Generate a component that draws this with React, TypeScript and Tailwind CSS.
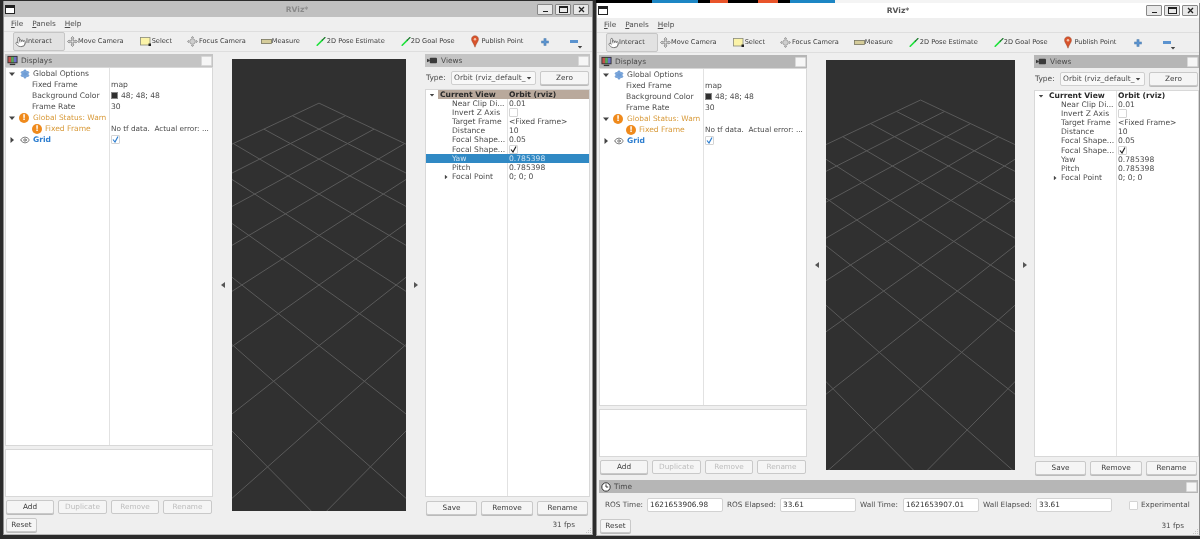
import { Eye, Pointer, Settings } from "lucide-react";

// orbit view of the 10x10 grid, yaw/pitch 45deg, distance 10
function GridView({ width, height }: { width: number; height: number }) {
  const f = height / 2 / Math.tan(Math.PI / 8);
  const project = (a: number, b: number) => {
    const depth = 10 - 0.5 * (a + b);
    return [
      width / 2 + (f * 0.7071 * (a - b)) / depth,
      height / 2 + (f * 0.5 * (a + b)) / depth,
    ];
  };
  const lines = [];
  for (let i = -5; i <= 5; i++) {
    const [x1, y1] = project(i, -5);
    const [x2, y2] = project(i, 5);
    const [x3, y3] = project(-5, i);
    const [x4, y4] = project(5, i);
    lines.push(<line key={`a${i}`} x1={x1} y1={y1} x2={x2} y2={y2} />);
    lines.push(<line key={`b${i}`} x1={x3} y1={y3} x2={x4} y2={y4} />);
  }
  return (
    <svg width={width} height={height} className="block" stroke="#5a5a5a" strokeWidth="1">
      {lines}
    </svg>
  );
}

function Warn({ className }: { className?: string }) {
  return (
    <span className={`flex h-[10px] w-[10px] shrink-0 items-center justify-center rounded-full bg-[#ef8a1c] text-[8px] font-bold leading-none text-white ${className ?? ""}`}>
      !
    </span>
  );
}

function Arrow({ open, className }: { open?: boolean; className?: string }) {
  return (
    <svg width="6" height="6" viewBox="0 0 6 6" className={`shrink-0 ${className ?? ""}`} fill="#444">
      {open ? <path d="M0 1.5h6L3 5z" /> : <path d="M1.5 0v6L5 3z" />}
    </svg>
  );
}

function Check({ checked, dark }: { checked?: boolean; dark?: boolean }) {
  return (
    <span className="flex h-[9px] w-[9px] shrink-0 items-center justify-center rounded-[1px] border border-[#d4d4d4] bg-white">
      {checked && (
        <svg width="7" height="7" viewBox="0 0 7 7" fill="none" stroke={dark ? "#222" : "#2f7fd0"} strokeWidth="1.2">
          <path d="M1 3.5 3 6 6 0.5" />
        </svg>
      )}
    </span>
  );
}

function Btn({ label, disabled, className }: { label: string; disabled?: boolean; className?: string }) {
  return (
    <div className={`flex h-[14px] items-center justify-center rounded-[2px] border border-[#c9c9c9] bg-[#f5f5f5] text-[7.3px] ${disabled ? "text-[#bdbdbd]" : "text-[#3c3c3c] shadow-[0_1px_0_#bbb]"} ${className ?? ""}`}>
      {label}
    </div>
  );
}

function PaneHeader({ icon, title, active }: { icon?: React.ReactNode; title: string; active?: boolean }) {
  return (
    <div className={`flex h-[13px] shrink-0 items-center pl-[2px] pr-[1px] text-[#4a4a4a] ${active ? "bg-[#b6b6b6]" : "bg-[#c4c4c4]"}`}>
      <span className="flex w-[14px] shrink-0 items-center">{icon}</span>
      <span className="flex-1 text-[7.4px]">{title}</span>
      <span className="h-[10px] w-[11px] rounded-[1px] border border-[#d8d8d8] bg-[#f6f6f6]" />
    </div>
  );
}

function MonitorIcon() {
  return (
    <svg width="11" height="11" viewBox="0 0 12 11">
      <rect x="0.5" y="0.5" width="11" height="8" fill="#333" />
      <rect x="1.5" y="1.5" width="3" height="6" fill="#c0504d" />
      <rect x="4.5" y="1.5" width="3" height="6" fill="#5aa85a" />
      <rect x="7.5" y="1.5" width="3" height="6" fill="#6f6fc8" />
      <rect x="3" y="9" width="6" height="1.5" fill="#333" />
    </svg>
  );
}

function CameraIcon() {
  return (
    <svg width="10" height="7" viewBox="0 0 11 7" fill="#3a3a3a">
      <path d="M0 1.5 3 3v1L0 5.5z" />
      <rect x="3" y="0.5" width="8" height="6" rx="1" />
    </svg>
  );
}

function ClockIcon() {
  return (
    <svg width="10" height="10" viewBox="0 0 10 10" fill="#fff" stroke="#333" strokeWidth="1">
      <circle cx="5" cy="5" r="4.2" />
      <path d="M5 2.4V5h2.2" fill="none" />
    </svg>
  );
}

function MoveIcon() {
  return (
    <svg width="11" height="11" viewBox="0 0 12 12" fill="#e4e4e4" stroke="#777" strokeWidth="0.8">
      <path d="M6 .5 7.6 2.4H6.8V5.2H9.6V4.4L11.5 6 9.6 7.6V6.8H6.8V9.6H7.6L6 11.5 4.4 9.6H5.2V6.8H2.4V7.6L.5 6 2.4 4.4V5.2H5.2V2.4H4.4z" />
    </svg>
  );
}

function FocusIcon() {
  return (
    <svg width="11" height="11" viewBox="0 0 12 12" fill="#cfcfcf" stroke="#8a8a8a" strokeWidth="0.7">
      <path d="M6 .4 7.4 2H4.6zM6 11.6 4.6 10h2.8zM.4 6 2 4.6v2.8zM11.6 6 10 7.4V4.6z" />
      <circle cx="6" cy="6" r="3" />
    </svg>
  );
}

function SelectIcon() {
  return (
    <svg width="11" height="9" viewBox="0 0 11 9">
      <rect x="0.5" y="0.5" width="9.5" height="7.5" fill="#fbf3a8" stroke="#8b8b78" strokeWidth="0.8" />
      <rect x="8.5" y="6.5" width="2.5" height="2.5" fill="#222" />
    </svg>
  );
}

function MeasureIcon() {
  return (
    <svg width="11" height="5" viewBox="0 0 11 5">
      <rect x="0.5" y="0.5" width="10" height="4" fill="#d5cc9a" stroke="#77745e" strokeWidth="0.8" />
    </svg>
  );
}

function PoseIcon() {
  return (
    <svg width="10" height="9" viewBox="0 0 10 10" fill="none" strokeLinecap="round">
      <path d="M.8 9.2 6.5 3.5" stroke="#1fe23c" strokeWidth="1.8" />
      <path d="M6.5 3.5 9.4.6" stroke="#1c7a2c" strokeWidth="1.4" />
    </svg>
  );
}

function PinIcon() {
  return (
    <svg width="8" height="13" viewBox="0 0 9 14">
      <path d="M4.5.5C2.2.5.6 2.2.6 4.4c0 2.7 2.6 4.6 3.9 9 1.3-4.4 3.9-6.3 3.9-9C8.4 2.2 6.8.5 4.5.5z" fill="#d9532c" stroke="#94462a" strokeWidth="0.5" />
      <circle cx="4.5" cy="4.4" r="1.4" fill="#f3c3a8" />
    </svg>
  );
}

function ToolItem({ icon, label, className, slot }: { icon: React.ReactNode; label: string; className?: string; slot: string }) {
  return (
    <div className={`flex shrink-0 items-center ${className ?? ""}`}>
      <span className={`flex shrink-0 items-center ${slot}`}>{icon}</span>
      <span>{label}</span>
    </div>
  );
}

function Toolbar() {
  return (
    <div className="flex h-[21px] shrink-0 items-center border-y border-[#dedede] bg-[#efefef] pl-[9px] text-[6.6px] text-[#3c3c3c]">
      <div className="flex h-[19px] w-[52px] shrink-0 items-center rounded-[2px] border border-[#c6c6c6] bg-[#e2e2e2] pl-px">
        <Pointer size={14} strokeWidth={1.3} className="w-[11px] shrink-0 fill-white text-[#333]" />
        <span>Interact</span>
      </div>
      <ToolItem icon={<MoveIcon />} label="Move Camera" slot="w-[11px]" className="ml-[2px]" />
      <ToolItem icon={<SelectIcon />} label="Select" slot="w-[12px]" className="ml-[16px]" />
      <ToolItem icon={<FocusIcon />} label="Focus Camera" slot="w-[12px]" className="ml-[15px]" />
      <ToolItem icon={<MeasureIcon />} label="Measure" slot="w-[11px]" className="ml-[15px]" />
      <ToolItem icon={<PoseIcon />} label="2D Pose Estimate" slot="w-[11px]" className="ml-[16px]" />
      <ToolItem icon={<PoseIcon />} label="2D Goal Pose" slot="w-[10px]" className="ml-[16px]" />
      <ToolItem icon={<PinIcon />} label="Publish Point" slot="w-[10px]" className="ml-[17px]" />
      <svg width="8" height="8" viewBox="0 0 10 10" className="ml-[18px]" fill="#5b93cf" stroke="#3f6f9f" strokeWidth="0.5">
        <path d="M3.6.6h2.8v3h3v2.8h-3v3H3.6v-3h-3V3.6h3z" />
      </svg>
      <div className="relative ml-[21px] h-[10px] w-[12px]">
        <span className="absolute left-0 top-[3px] h-[3px] w-[8px] bg-[#5b93cf]" />
        <Arrow open className="absolute right-[-1px] bottom-[-3px] scale-75" />
      </div>
    </div>
  );
}

function PropRow({ name, value }: { name: string; value: React.ReactNode }) {
  return (
    <div className="flex h-[11px] items-center">
      <span className="ml-[26px] w-[79px] shrink-0 whitespace-nowrap">{name}</span>
      <span className="whitespace-nowrap">{value}</span>
    </div>
  );
}

function DisplayTree() {
  const nameRow = "flex h-[11px] items-center";
  return (
    <div className="relative min-h-0 flex-1 border border-[#d8d8d8] bg-white text-[7.6px] text-[#4c4c4c]">
      <div className="absolute bottom-0 left-[103px] top-0 w-px bg-[#e2e2e2]" />
      <div className={nameRow}>
        <Arrow open className="ml-[3px]" />
        <Settings size={10} strokeWidth={2.4} className="ml-[5px] shrink-0 fill-[#7ba7dc] text-[#6b9ad4]" />
        <span className="ml-[3px]">Global Options</span>
      </div>
      <PropRow name="Fixed Frame" value="map" />
      <PropRow name="Background Color" value={<span className="flex items-center gap-[3px]"><span className="h-[7px] w-[7px] border border-[#888] bg-[#303030]" />48; 48; 48</span>} />
      <PropRow name="Frame Rate" value="30" />
      <div className={nameRow}>
        <Arrow open className="ml-[3px]" />
        <Warn className="ml-[4px]" />
        <span className="ml-[4px] whitespace-nowrap text-[7.4px] text-[#d89a3a]">Global Status: Warn</span>
      </div>
      <div className={nameRow}>
        <Warn className="ml-[26px]" />
        <span className="ml-[3px] w-[66px] shrink-0 whitespace-nowrap text-[#d89a3a]">Fixed Frame</span>
        <span className="whitespace-nowrap text-[7.3px]">No tf data.&nbsp; Actual error: ...</span>
      </div>
      <div className={nameRow}>
        <Arrow className="ml-[3px]" />
        <Eye size={10} strokeWidth={1.8} className="ml-[5px] shrink-0 text-[#555]" />
        <span className="ml-[3px] w-[78px] shrink-0 font-bold text-[#2f7fd0]">Grid</span>
        <Check checked />
      </div>
    </div>
  );
}

function ViewRow({ name, value, selected, arrow }: { name: string; value: React.ReactNode; selected?: boolean; arrow?: boolean }) {
  return (
    <div className={`flex h-[9.15px] items-center ${selected ? "bg-[#3089c4] text-[#cfe3f2]" : ""}`}>
      <span className="flex w-[83px] shrink-0 items-center whitespace-nowrap pl-[26px]">
        {arrow && <Arrow className="-ml-[9px] mr-[3px] scale-75" />}
        {name}
      </span>
      <span className="whitespace-nowrap">{value}</span>
    </div>
  );
}

function ViewsPanel({ active, highlight }: { active?: boolean; highlight?: boolean }) {
  return (
    <div className="flex w-[165px] shrink-0 flex-col">
      <PaneHeader icon={<CameraIcon />} title="Views" active={active} />
      <div className="flex h-[22px] shrink-0 items-center text-[7.5px] text-[#4c4c4c]">
        <span className="ml-[1px] w-[25px]">Type:</span>
        <div className="flex h-[14px] w-[85px] items-center justify-between rounded-[2px] border border-[#cfcfcf] bg-[#f8f8f8] pl-[2px] pr-[3px]">
          <span className="whitespace-nowrap">Orbit (rviz_default_</span>
          <Arrow open className="scale-75" />
        </div>
        <Btn label="Zero" className="ml-[4px] w-[49px]" />
      </div>
      <div className="relative min-h-0 flex-1 border border-[#d8d8d8] bg-white text-[7.6px] text-[#4c4c4c]">
        <div className="absolute bottom-0 left-[81px] top-0 w-px bg-[#e2e2e2]" />
        <div className="relative flex h-[9.15px] items-center font-bold text-[#2a2a2a]">
          <span className="flex w-[12px] shrink-0 items-center">
            <Arrow open className="ml-[3px] scale-75" />
          </span>
          <div className={`flex h-full flex-1 items-center pl-[2px] ${highlight ? "bg-[#b9a99c]" : ""}`}>
            <span className="w-[69px] shrink-0 whitespace-nowrap">Current View</span>
            <span className="whitespace-nowrap">Orbit (rviz)</span>
          </div>
        </div>
        <div className="relative">
          <ViewRow name="Near Clip Di..." value="0.01" />
          <ViewRow name="Invert Z Axis" value={<Check />} />
          <ViewRow name="Target Frame" value="<Fixed Frame>" />
          <ViewRow name="Distance" value="10" />
          <ViewRow name="Focal Shape..." value="0.05" />
          <ViewRow name="Focal Shape..." value={<Check checked dark />} />
          <ViewRow name="Yaw" value="0.785398" selected={highlight} />
          <ViewRow name="Pitch" value="0.785398" />
          <ViewRow name="Focal Point" value="0; 0; 0" arrow />
        </div>
      </div>
      <div className="flex h-[18px] shrink-0 items-end gap-[4px] px-[1px]">
        <Btn label="Save" className="w-[51px]" />
        <Btn label="Remove" className="w-[52px]" />
        <Btn label="Rename" className="w-[51px]" />
      </div>
    </div>
  );
}

function DisplaysPanel({ active }: { active?: boolean }) {
  return (
    <div className="flex w-[208px] shrink-0 flex-col">
      <PaneHeader icon={<MonitorIcon />} title="Displays" active={active} />
      <DisplayTree />
      <div className="mt-[3px] h-[48px] shrink-0 border border-[#d8d8d8] bg-white" />
      <div className="flex h-[18px] shrink-0 items-end gap-[4px] px-[1px] pb-px">
        <Btn label="Add" className="w-[48px]" />
        <Btn label="Duplicate" disabled className="w-[49px]" />
        <Btn label="Remove" disabled className="w-[48px]" />
        <Btn label="Rename" disabled className="w-[49px]" />
      </div>
    </div>
  );
}

function Gutter({ dir }: { dir: "left" | "right" }) {
  return (
    <div className="flex w-[19px] shrink-0 items-center justify-center">
      <svg width="4" height="6" viewBox="0 0 4 6" fill="#555">
        {dir === "left" ? <path d="M4 0v6L0 3z" /> : <path d="M0 0v6l4-3z" />}
      </svg>
    </div>
  );
}

function TimeField({ label, value, labelW }: { label: string; value: string; labelW: string }) {
  return (
    <>
      <span className={`shrink-0 whitespace-nowrap ${labelW}`}>{label}</span>
      <div className="flex h-[14px] w-[76px] shrink-0 items-center rounded-[2px] border border-[#d2d2d2] bg-white pl-[2px] text-[#333]">{value}</div>
    </>
  );
}

function TimePanel() {
  return (
    <div className="mt-[5px] shrink-0">
      <div className="flex h-[13px] items-center bg-[#b6b6b6] pl-[2px] pr-[1px] text-[#4a4a4a]">
        <span className="flex w-[13px] items-center"><ClockIcon /></span>
        <span className="flex-1 text-[7.4px]">Time</span>
        <span className="h-[10px] w-[11px] rounded-[1px] border border-[#d8d8d8] bg-[#f6f6f6]" />
      </div>
      <div className="flex h-[24px] items-center pl-[6px] text-[7.3px] text-[#4c4c4c]">
        <TimeField label="ROS Time:" value="1621653906.98" labelW="w-[42px]" />
        <span className="w-[4px] shrink-0" />
        <TimeField label="ROS Elapsed:" value="33.61" labelW="w-[53px]" />
        <span className="w-[4px] shrink-0" />
        <TimeField label="Wall Time:" value="1621653907.01" labelW="w-[43px]" />
        <span className="w-[4px] shrink-0" />
        <TimeField label="Wall Elapsed:" value="33.61" labelW="w-[53px]" />
        <span className="ml-[17px]"><Check /></span>
        <span className="ml-[3px]">Experimental</span>
      </div>
    </div>
  );
}

function RVizWindow({ active, width, renderW, renderH, time, pad }: { active?: boolean; width: string; renderW: number; renderH: number; time?: boolean; pad: string }) {
  return (
    <div className={`flex h-full shrink-0 flex-col border-x border-b border-x-[#8f8f8f] border-b-[#b5b5b5] bg-[#efefef] ${width}`}>
      <div className={`flex shrink-0 items-center ${active ? "h-[15px] bg-white pl-px pr-px" : "h-[16px] bg-[#c0c0c0] pl-px pr-[3px] pt-px"}`}>
        <span className="w-[52px] shrink-0">
          <span className="block h-[9px] w-[10px] border border-[#222] border-t-[3px] bg-white" />
        </span>
        <span className={`flex-1 text-center text-[7.6px] font-bold ${active ? "text-[#555]" : "text-[#8a8a8a]"}`}>RViz*</span>
        <div className="flex gap-[2px]">
          {["min", "max", "close"].map((k) => (
            <span key={k} className="flex h-[11px] w-[16px] items-center justify-center rounded-[1px] border border-[#888] bg-[#e8e8e8]">
              {k === "min" && <span className="mt-[4px] h-px w-[5px] bg-[#222]" />}
              {k === "max" && <span className="h-[7px] w-[9px] border border-[#222] border-t-2" />}
              {k === "close" && (
                <svg width="7" height="7" viewBox="0 0 7 7" stroke="#222" strokeWidth="1.3"><path d="M1 1l5 5M6 1 1 6" /></svg>
              )}
            </span>
          ))}
        </div>
      </div>
      <div className="flex h-[14px] shrink-0 items-center gap-[9px] bg-[#efefef] pl-[7px] text-[7.3px] text-[#4c4c4c]">
        <span><span className="underline">F</span>ile</span>
        <span><span className="underline">P</span>anels</span>
        <span><span className="underline">H</span>elp</span>
      </div>
      <Toolbar />
      <div className={`mt-[2px] flex min-h-0 flex-1 ${pad}`}>
        <DisplaysPanel active={active} />
        <Gutter dir="left" />
        <div className="mt-[5px] shrink-0 self-start overflow-hidden bg-[#303030]">
          <GridView width={renderW} height={renderH} />
        </div>
        <Gutter dir="right" />
        <ViewsPanel active={active} highlight={!active} />
      </div>
      {time && <div className={pad}><TimePanel /></div>}
      <div className={`relative flex shrink-0 items-center justify-between text-[7.3px] text-[#4c4c4c] ${active ? "h-[18px]" : "h-[19px]"} ${pad}`}>
        <Btn label="Reset" className="ml-[1px] w-[31px]" />
        <span className="mr-[14px]">31 fps</span>
        <svg width="8" height="8" viewBox="0 0 8 8" fill="#c4c4c4" className="absolute bottom-0 right-0">
          <rect x="6" y="6" width="1" height="1" />
          <rect x="4" y="6" width="1" height="1" />
          <rect x="6" y="4" width="1" height="1" />
          <rect x="2" y="6" width="1" height="1" />
          <rect x="4" y="4" width="1" height="1" />
          <rect x="6" y="2" width="1" height="1" />
        </svg>
      </div>
    </div>
  );
}

export default function App() {
  return (
    <div className="flex h-[539px] w-[1200px] overflow-hidden bg-[#2b2b2b] font-['DejaVu_Sans',sans-serif] text-[7.5px] leading-none blur-[0.4px] [text-rendering:geometricPrecision]">
      <div className="ml-[3px] mt-px h-[534px]">
        <RVizWindow width="w-[590px]" renderW={174} renderH={452} pad="pl-px pr-[3px]" />
      </div>
      <div className="ml-[3px] flex h-full flex-col">
        <div className="flex h-[3px] shrink-0">
          <span className="w-[56px] bg-black" />
          <span className="w-[46px] bg-[#1d86c4]" />
          <span className="w-[12px] bg-black" />
          <span className="w-[18px] bg-[#e8542a]" />
          <span className="w-[30px] bg-black" />
          <span className="w-[20px] bg-[#e8542a]" />
          <span className="w-[12px] bg-black" />
          <span className="w-[45px] bg-[#1d86c4]" />
          <span className="flex-1 bg-[#f4f4f4]" />
        </div>
        <div className="h-[533px]">
          <RVizWindow active width="w-[604px]" renderW={189} renderH={410} time pad="pl-[2px] pr-px" />
        </div>
      </div>
    </div>
  );
}
